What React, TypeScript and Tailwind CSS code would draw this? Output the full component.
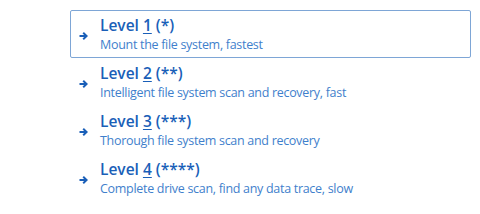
const LEVELS = [
  { n: '1', stars: '(*)', desc: 'Mount the file system, fastest' },
  { n: '2', stars: '(**)', desc: 'Intelligent file system scan and recovery, fast' },
  { n: '3', stars: '(***)', desc: 'Thorough file system scan and recovery' },
  { n: '4', stars: '(****)', desc: 'Complete drive scan, find any data trace, slow' },
];

function Arrow() {
  return (
    <svg width="9" height="8" viewBox="0 0 9 8" className="shrink-0">
      <path d="M0.5 4H7.6 M4.2 0.8L7.6 4L4.2 7.2" fill="none" stroke="#1a5fb8" strokeWidth="2" />
    </svg>
  );
}

export default function App() {
  return (
    <div
      className="w-[480px] h-[214px] bg-white pt-[10px] pl-[70px]"
      style={{ fontFamily: '"Open Sans", "Noto Sans", sans-serif' }}
    >
      <div className="w-[401px] flex flex-col">
        {LEVELS.map((l, i) => (
          <div
            key={l.n}
            className={`h-[48px] flex items-center rounded-[2px] border ${
              i === 0 ? 'border-[#7ea6d6]' : 'border-transparent'
            }`}
          >
            <div className="w-[29px] pl-[8px] pt-[3px] flex">
              <Arrow />
            </div>
            <div className="flex flex-col pt-[1px]">
              <div className="text-[15.5px] leading-[20px] font-semibold text-[#1a5fb8]">
                Level <span className="underline underline-offset-2 decoration-1">{l.n}</span> {l.stars}
              </div>
              <div className="text-[12.5px] leading-[20px] text-[#3f7fcc] tracking-[-0.3px]">{l.desc}</div>
            </div>
          </div>
        ))}
      </div>
    </div>
  );
}
